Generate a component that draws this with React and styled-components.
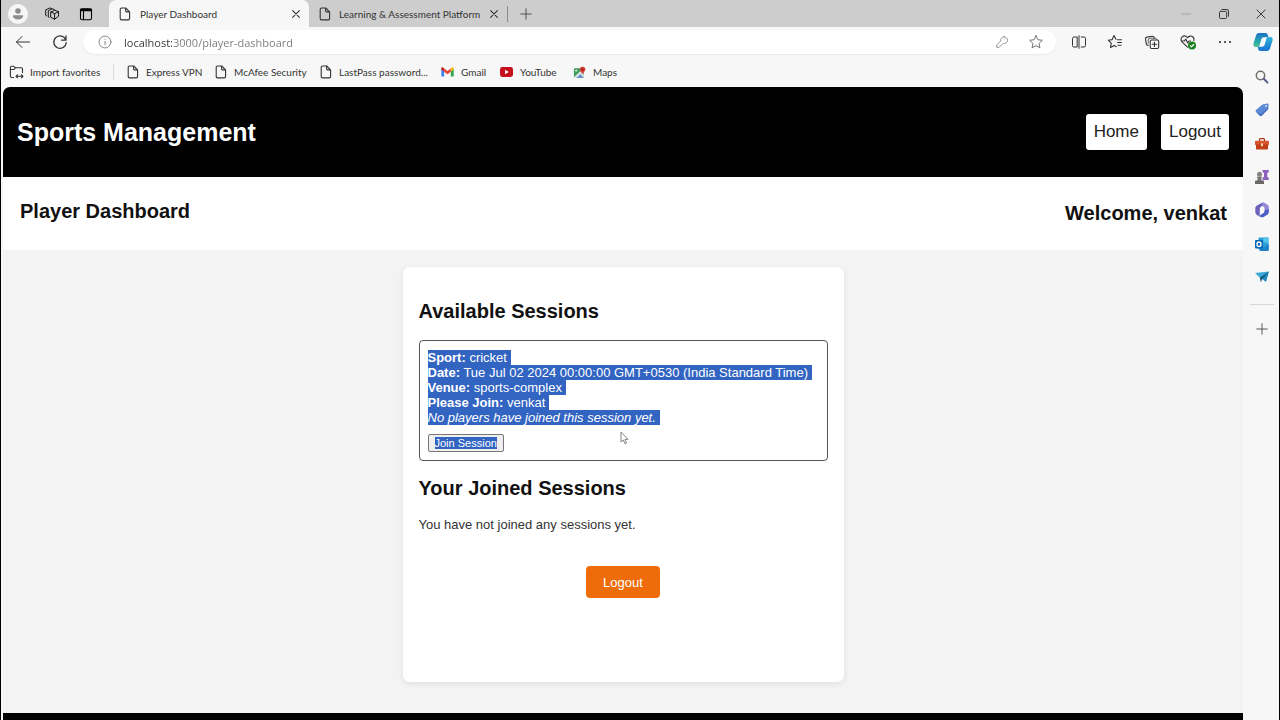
import styled, { createGlobalStyle } from "styled-components";

const GlobalStyle = createGlobalStyle`
  * {
    box-sizing: border-box;
  }

  body {
    margin: 0;
    background-color: #f7f7f7;
    font-family: "Liberation Sans", Arial, sans-serif;
  }

  h1, h2, p {
    margin: 0;
    padding: 0;
  }

  svg {
    flex-shrink: 0;
  }

  button {
    font-family: inherit;
    padding: 0;
    border: none;
    background: none;
    cursor: pointer;
  }
`;

const Window = styled.div`
  display: flex;
  flex-direction: column;
  min-height: 100vh;
  border-left: 1px solid #000;
  border-right: 1px solid #000;
  background-color: #f7f7f7;
`;

const Chrome = styled.div`
  font-family: Lato, "Open Sans", sans-serif;
  font-size: 10px;
  line-height: 14px;
  color: #333;
`;

const TabBar = styled.div`
  display: flex;
  align-items: center;
  height: 27px;
  background-color: #cdcdcd;
`;

const TabBarButton = styled.button`
  display: flex;
  align-items: center;
  justify-content: center;
  width: ${(props) => props.$width || "34px"};
  height: 27px;
`;

const Tab = styled.div`
  display: flex;
  align-items: center;
  gap: ${(props) => (props.$active ? "9px" : "8px")};
  width: ${(props) => (props.$active ? "200px" : "198px")};
  height: 27px;
  margin-left: ${(props) => (props.$active ? "6px" : "0")};
  padding: 0 7px 0 10px;
  border-radius: 7px 7px 0 0;
  background-color: ${(props) => (props.$active ? "#f7f7f7" : "transparent")};
`;

const TabTitle = styled.span`
  flex: 1;
  white-space: nowrap;
`;

const Separator = styled.span`
  width: 1px;
  height: 16px;
  background-color: ${(props) => props.$color};
`;

const IconButton = styled.button`
  display: flex;
  align-items: center;
  justify-content: center;
  color: #333;
`;

const WindowControls = styled.div`
  display: flex;
  justify-content: space-between;
  width: 87px;
  margin-left: auto;
  margin-right: 12px;
`;

const Toolbar = styled.div`
  display: flex;
  align-items: center;
  height: 30px;
  padding-right: 6px;
`;

const NavButtons = styled.div`
  display: flex;
  gap: 21px;
  padding: 0 15px 0 14px;
`;

const AddressBar = styled.label`
  display: flex;
  flex: 1;
  align-items: center;
  gap: 12px;
  height: 24px;
  padding: 0 12px 0 15px;
  border-radius: 12px;
  background-color: #fff;
  box-shadow: 0 1px 2px rgba(0, 0, 0, 0.06);
`;

/* host is darker than the path, like the browser does it */
const AddressInput = styled.input`
  flex: 1;
  min-width: 0;
  padding: 0;
  border: none;
  outline: none;
  font-family: "Open Sans", sans-serif;
  font-size: 11px;
  color: transparent;
  background: linear-gradient(90deg, #333 48px, #7a7a7a 48px);
  background-clip: text;
`;

const AddressIcons = styled.div`
  display: flex;
  gap: 19px;
`;

const ToolIcons = styled.div`
  display: flex;
  align-items: center;
  justify-content: space-between;
  width: 202px;
  margin-left: 15px;
`;

const Body = styled.div`
  display: flex;
  flex: 1;
`;

const Column = styled.div`
  display: flex;
  flex: 1;
  flex-direction: column;
`;

const FavoritesRow = styled(Chrome)`
  display: flex;
  align-items: center;
  height: 30px;
  padding-left: 8px;
`;

const Favorite = styled.a`
  display: flex;
  align-items: center;
  gap: ${(props) => props.$gap || "7px"};
  width: ${(props) => props.$width};
  color: #333;
  text-decoration: none;
  white-space: nowrap;
`;

const LinkList = styled.nav`
  display: flex;
  padding-left: 13px;
`;

const Sidebar = styled.aside`
  width: 36px;
  padding: 12px 0 0 2px;
`;

const SidebarList = styled.div`
  display: flex;
  flex-direction: column;
  align-items: center;
  justify-content: space-between;
  height: 216px;
`;

const SidebarFooter = styled.div`
  display: flex;
  justify-content: center;
  margin: 19px 5px 0;
  padding-top: 17px;
  border-top: 1px solid #d8d8d8;
`;

const Page = styled.div`
  display: flex;
  flex: 1;
  flex-direction: column;
  margin-left: 2px;
  overflow: hidden;
  border-radius: 7px 7px 0 0;
  background-color: #f3f3f3;
`;

const Header = styled.header`
  display: flex;
  align-items: center;
  justify-content: space-between;
  height: 90px;
  padding: 0 14px;
  background-color: #000;
`;

const Brand = styled.h1`
  font-size: 25px;
  color: #fff;
`;

const Nav = styled.nav`
  display: flex;
  gap: 14px;
`;

const NavLink = styled.a`
  padding: 8px;
  border-radius: 3px;
  background-color: #fff;
  font-size: 17px;
  line-height: 20px;
  color: #222;
  text-decoration: none;
`;

const SubHeader = styled.div`
  display: flex;
  justify-content: space-between;
  height: 73px;
  padding: 23px 16px 23px 17px;
  background-color: #fff;
`;

const Heading = styled.h2`
  font-size: 20px;
  line-height: 23px;
  color: #111;
`;

const Welcome = styled(Heading)`
  padding-top: 2px;
`;

const Main = styled.main`
  display: flex;
  justify-content: center;
  padding: 17px 0 31px;
`;

const Card = styled.section`
  width: 441px;
  min-height: 415px;
  padding: 33px 16px;
  border-radius: 7px;
  background-color: #fff;
  box-shadow: 0 2px 6px rgba(0, 0, 0, 0.08);
`;

const Session = styled.div`
  position: relative;
  margin: 17px 0 16px;
  padding: 9px 8px 8px;
  border: 1px solid #555;
  border-radius: 4px;
  font-size: 13px;
  line-height: 15px;
`;

const Line = styled.p`
  white-space: nowrap;
`;

const Selected = styled.mark`
  padding-right: 4px;
  background-color: #3264c2;
  color: #fff;
`;

const JoinButton = styled.button`
  display: block;
  height: 18px;
  margin-top: 9px;
  padding: 0 6px;
  border: 1px solid #777;
  border-radius: 2px;
  background-color: #efefef;
  font-size: 11px;
  line-height: 13px;
`;

const JoinLabel = styled.mark`
  background-color: #3264c2;
  color: #fff;
`;

const Pointer = styled.svg`
  position: absolute;
  top: 90px;
  left: 200px;
`;

const Note = styled.p`
  margin-top: 17px;
  font-size: 13px;
  line-height: 15px;
  color: #333;
`;

const LogoutButton = styled.button`
  display: block;
  height: 32px;
  margin: 34px auto 0;
  padding: 0 17px;
  border-radius: 4px;
  background-color: #ef6c0a;
  font-size: 13px;
  color: #fff;
`;

const Footer = styled.footer`
  flex: 1;
  min-height: 7px;
  background-color: #000;
`;

function Icon({ size = 16, width = 1, children }) {
  return (
    <svg
      width={size}
      height={size}
      viewBox="0 0 16 16"
      fill="none"
      stroke="currentColor"
      strokeWidth={width}
      strokeLinecap="round"
      strokeLinejoin="round"
    >
      {children}
    </svg>
  );
}

function FileIcon() {
  return (
    <svg width="12" height="14" viewBox="0 0 12 14" fill="none" stroke="#333" strokeWidth="1.1" strokeLinejoin="round">
      <path d="M2.5 1h4.2L10.6 4.8V11.6a1.3 1.3 0 0 1-1.3 1.3H2.5a1.3 1.3 0 0 1-1.3-1.3V2.3A1.3 1.3 0 0 1 2.5 1Z" />
      <path d="M6.6 1.2v2.5a1.2 1.2 0 0 0 1.2 1.2h2.6" />
    </svg>
  );
}

function CloseIcon() {
  return (
    <Icon size={12} width={1.5}>
      <path d="M3.5 3.5l9 9M12.5 3.5l-9 9" />
    </Icon>
  );
}

function ProfileIcon() {
  return (
    <svg width="20" height="20" viewBox="0 0 20 20">
      <circle cx="10" cy="10" r="10" fill="#f6f6f6" />
      <circle cx="10" cy="7" r="2.8" fill="#8d8d8d" />
      <path d="M5 11.3h10v1c0 2-2.2 3.2-5 3.2s-5-1.2-5-3.2Z" fill="#8d8d8d" />
    </svg>
  );
}

function WorkspacesIcon() {
  return (
    <Icon width={0.9}>
      <path d="M7 6l3.8-1.8 3.7 1.5v4.6L10.6 13.200 7 11.4Z" />
      <path d="M7 6l3.600 1.600 3.900-1.900M10.6 7.600v5.600" />
      <path d="M5 11.300l-.7-.3V4.700l4-1.900 2 .7M2.500 9.800l-.8-.4V3.900l4-1.900 1.800.5" />
    </Icon>
  );
}

function TabsIcon() {
  return (
    <Icon width={1.100}>
      <rect x="2.500" y="2.700" width="11" height="11" rx="1.500" />
      <path d="M3 4h10" strokeWidth="2.400" />
      <path d="M5.500 5v8.500" />
    </Icon>
  );
}

function BackIcon() {
  return (
    <Icon>
      <path d="M14.5 8h-13M7 2.5L1.5 8 7 13.5" />
    </Icon>
  );
}

function RefreshIcon() {
  return (
    <Icon width={1.200}>
      <path d="M13.900 6.200A6.200 6.200 0 1 0 14.200 8.500M14 1.800v4.400H9.600" />
    </Icon>
  );
}

function InfoIcon() {
  return (
    <Icon size={14}>
      <circle cx="8" cy="8" r="6.800" stroke="#777" />
      <path d="M8 7.200v4M8 4.800v.3" stroke="#777" />
    </Icon>
  );
}

function KeyIcon() {
  return (
    <Icon size={14}>
      <path
        stroke="#888"
        d="M10.300 2a3.900 3.900 0 1 1-1 7.600L4.800 14.100H2v-2.600l4.500-4.600A3.900 3.900 0 0 1 10.300 2ZM11.300 4.700v.1"
      />
    </Icon>
  );
}

function StarIcon() {
  return (
    <Icon>
      <path
        stroke="#777"
        d="M8 1.700l1.900 4 4.400.6-3.200 3.100.8 4.400L8 11.700l-3.900 2.100.8-4.400L1.700 6.300l4.400-.6Z"
      />
    </Icon>
  );
}

function SplitIcon() {
  return (
    <Icon>
      <path d="M5.800 3H3a1.500 1.500 0 0 0-1.500 1.500v7A1.500 1.500 0 0 0 3 13h2.800ZM10.200 3H13a1.500 1.500 0 0 1 1.500 1.500v7A1.500 1.500 0 0 1 13 13h-2.800M8 1.700v12.600" />
    </Icon>
  );
}

function FavoritesIcon() {
  return (
    <Icon width={1.100}>
      <path d="M10.500 5.700h4M10.500 8.500h4M11 11.300h3" />
      <path d="M9 5.300L7 1.500 5.200 5.600 1.300 6.200l2.900 2.900-.7 4.300L7.200 11.400l2 1.300" />
    </Icon>
  );
}

function CollectionsIcon() {
  return (
    <Icon width={1.100}>
      <rect x="6.200" y="6" width="8.500" height="8.500" rx="1.500" />
      <path d="M10.450 8v4.500M8.200 10.250h4.500" />
      <path d="M4.200 11.400c-1 0-1.700-.6-1.900-1.600L1.500 5c-.1-1 .4-1.800 1.400-1.900l5.300-.9c1-.1 1.800.3 2 1.300l.1.500" />
      <path d="M4.200 9.300V6.200A2 2 0 0 1 6.200 4.200h5c.9 0 1.600.5 1.800 1.300" strokeWidth="0.800" />
    </Icon>
  );
}

function HealthIcon() {
  return (
    <Icon width={1.100}>
      <path d="M7.500 13.200L2 7.800a3.400 3.400 0 0 1 .2-4.900c1.600-1.400 3.700-1 5.300.7 1.600-1.700 3.900-2.100 5.400-.6 1 1 1.300 2.300.9 3.500M1.800 7h2.700l1.300-2 1.800 4 1.300-2h1.500" />
      <circle cx="12" cy="11.500" r="4" fill="#17821b" stroke="none" />
      <path d="M10.300 11.600l1.200 1.200 2.200-2.300" stroke="#fff" />
    </Icon>
  );
}

function MoreIcon() {
  return (
    <svg width="16" height="16" viewBox="0 0 16 16" fill="#333">
      <circle cx="3" cy="8" r="1.100" />
      <circle cx="8" cy="8" r="1.100" />
      <circle cx="13" cy="8" r="1.100" />
    </svg>
  );
}

function CopilotIcon() {
  return (
    <svg width="20" height="20" viewBox="0 0 20 20">
      <defs>
        <linearGradient id="copilotLeft" x1="0" y1="0" x2="0" y2="1">
          <stop offset="0" stopColor="#1a6fc4" />
          <stop offset="0.600" stopColor="#28a8b0" />
          <stop offset="1" stopColor="#52c08c" />
        </linearGradient>
        <linearGradient id="copilotRight" x1="0" y1="0" x2="0" y2="1">
          <stop offset="0" stopColor="#2fb4d8" />
          <stop offset="1" stopColor="#1674d4" />
        </linearGradient>
      </defs>
      <path d="M6 1h6.500c1.500 0 2 1 2.400 2.300l.6 2H11c-1.500 0-2.300.8-2.700 2.200L6.800 13c-.4 1.200-1 2-2.500 2H2.800C.5 15 0 13 .6 11L3 3.500C3.500 2 4.300 1 6 1Z" fill="url(#copilotLeft)" />
      <path d="M14 19H7.500c-1.500 0-2-1-2.400-2.300l-.6-2H9c1.500 0 2.300-.8 2.700-2.200L13.200 7c.4-1.200 1-2 2.500-2h1.500c2.300 0 2.800 2 2.200 4L17 16.500c-.5 1.500-1.300 2.500-3 2.500Z" fill="url(#copilotRight)" />
      <path d="M9.300 6.500h4l-2.500 7h-4Z" fill="#f3fbff" />
    </svg>
  );
}

function ImportIcon() {
  return (
    <svg width="15" height="14" viewBox="0 0 15 14" fill="none" stroke="#333" strokeWidth="1.100" strokeLinejoin="round">
      <path d="M5 12.500H2.600a1.200 1.200 0 0 1-1.200-1.200V2.500c0-.7.500-1.200 1.200-1.200h2.200l1.600 1.500L5 4.500H1.500M6.400 2.800h5.900c.8 0 1.200.5 1.200 1.200v4" />
      <path d="M7 11.300h7M8.800 9.500L7 11.300l1.800 1.800M12.200 9.500l1.800 1.800-1.800 1.800" />
    </svg>
  );
}

function GmailIcon() {
  return (
    <svg width="13" height="10" viewBox="0 0 13 10">
      <path d="M.3 1.500v7.200c0 .5.400.9.900.9h2V4.200Z" fill="#4285f4" />
      <path d="M12.700 1.500v7.200c0 .5-.4.900-.9.900h-2V4.200Z" fill="#34a853" />
      <path d="M9.800 1.400v3.300l2.900-2.200v-.8c0-1.300-1.300-1.700-2.100-1Z" fill="#fbbc04" />
      <path d="M3.200 4.700V1.400l3.300 2.500 3.300-2.500v3.300L6.500 7.200Z" fill="#ea4335" />
      <path d="M.3 1.700v.8l2.900 2.200V1.400L2.400.7C1.600 0 .3.400.3 1.700Z" fill="#c5221f" />
    </svg>
  );
}

function YouTubeIcon() {
  return (
    <svg width="13" height="10" viewBox="0 0 13 10">
      <rect width="13" height="10" rx="2.400" fill="#c80d1c" />
      <path d="M5 2.800v4.400L8.800 5Z" fill="#fff" />
    </svg>
  );
}

function MapsIcon() {
  return (
    <svg width="13" height="13" viewBox="0 0 14 13">
      <rect x="1" y="2" width="10.500" height="10.500" rx="1" fill="#3f9d5b" />
      <path d="M1 11.500L8 5l3.500 3.500v3a1 1 0 0 1-1 1H2a1 1 0 0 1-1-1Z" fill="#dfe5e8" />
      <path d="M3.500 12.500L8 8l3.500 4.500Z" fill="#6b93c8" />
      <path d="M2.200 4.500h2.500M3.400 3.500v2" stroke="#fff" strokeWidth="0.900" />
      <path d="M10.300.2a3 3 0 0 1 3 3c0 2-2.400 2.800-3 5.200-.6-2.400-3-3.200-3-5.200a3 3 0 0 1 3-3Z" fill="#d93a2f" />
      <circle cx="10.300" cy="3.200" r="1" fill="#82201a" />
    </svg>
  );
}

function SearchIcon() {
  return (
    <svg width="16" height="16" viewBox="0 0 16 16" fill="none">
      <circle cx="6.500" cy="6.500" r="4.200" stroke="#707070" strokeWidth="1.500" />
      <path d="M9.800 9.800l3.700 3.700" stroke="#5a5f8c" strokeWidth="2" strokeLinecap="round" />
    </svg>
  );
}

function ShoppingIcon() {
  return (
    <svg width="16" height="16" viewBox="0 0 16 16">
      <path d="M8.500 2.500l5-1c.7 0 1.200.5 1.100 1.200l-.5 4.600-6.400 6.400c-.6.600-1.300.6-1.900 0L1.900 9.800c-.5-.6-.5-1.300 0-1.900Z" fill="#5c88d6" />
      <path d="M1.900 9.800l3.900 3.900c.6.600 1.300.6 1.900 0l6.400-6.400.2-2-7.500 6.600Z" fill="#4a73c2" />
      <circle cx="12" cy="4" r="0.900" fill="#dce8ff" />
    </svg>
  );
}

function ToolsIcon() {
  return (
    <svg width="16" height="16" viewBox="0 0 16 16">
      <path d="M5.500 5V3.500c0-.6.300-.9.900-.9h3.200c.6 0 .9.300.9.900V5" fill="none" stroke="#a33417" strokeWidth="1.200" />
      <rect x="1" y="4.800" width="14" height="4.500" rx="1" fill="#d9532c" />
      <path d="M2 8.500h12v4c0 .6-.4 1-1 1H3c-.6 0-1-.4-1-1Z" fill="#c23e18" />
      <rect x="7" y="7.300" width="2" height="3" rx="0.500" fill="#ffd9b0" />
    </svg>
  );
}

function GamesIcon() {
  return (
    <svg width="16" height="16" viewBox="0 0 16 16">
      <path d="M8.500 1h6.300v2l-1.500 1v3.500l1.500 1.700V11H8.500V9.200L10 7.500V4L8.500 3Z" fill="#8c62bd" />
      <circle cx="5.500" cy="5.300" r="2.500" fill="#858585" />
      <path d="M3 7.800h5v1.400h-.8l.6 2.800H3.200l.6-2.800H3Z" fill="#777" />
      <path d="M1 12.500c0-.6.400-1 1-1h7c.6 0 1 .4 1 1V15H1Z" fill="#686868" />
    </svg>
  );
}

function OfficeIcon() {
  return (
    <svg width="16" height="16" viewBox="0 0 16 16">
      <path d="M7.600.9L3 3.400C1.900 4 1.300 5 1.300 6.200v3.900c0 1.200.6 2.200 1.600 2.800l1.900 1.100c.6-.4 1-1.200 1-2.100V6.700c0-.9.400-1.600 1.100-2l3.700-2.200Z" fill="#6a62bd" />
      <path d="M7.600.9c1-.5 2-.4 2.900.1l2.700 1.600c1 .6 1.600 1.600 1.600 2.800v4.400L10.500 7.500V6.300c0-.9-.5-1.500-1.100-1.900L8.500 4Z" fill="#9187d8" />
      <path d="M4.800 14l1.600.9c1 .6 2.200.6 3.200 0l3.600-2.100c1-.6 1.600-1.700 1.600-2.900V7.300l-4.300.7v1.200c0 .9-.4 1.400-1 1.800Z" fill="#4c5fc7" />
    </svg>
  );
}

function OutlookIcon() {
  return (
    <svg width="16" height="16" viewBox="0 0 16 16">
      <rect x="4.500" y="1.500" width="10" height="12.500" rx="1" fill="#2c9fdc" />
      <path d="M9.500 1.500h5v5h-5Z" fill="#54c6ee" />
      <path d="M5 8l5 3.500L14.800 8v6c0 .6-.4 1-1 1H6Z" fill="#1d83c9" />
      <rect x="1" y="4" width="8" height="8.500" rx="1" fill="#0e6ab3" />
      <ellipse cx="5" cy="8.200" rx="2" ry="2.200" fill="none" stroke="#fff" strokeWidth="1.300" />
    </svg>
  );
}

function DropIcon() {
  return (
    <svg width="16" height="16" viewBox="0 0 16 16">
      <path d="M1 4l14-1.500L5.800 8.500Z" fill="#38a8d8" />
      <path d="M15 2.500L12 13 8.700 10.200 5.800 8.500Z" fill="#1c8abb" />
      <path d="M5.800 8.500L15 2.500 8.300 9.900l-1.500 3.300Z" fill="#135a82" />
    </svg>
  );
}

function PlusIcon({ color = "#444" }) {
  return (
    <Icon size={14}>
      <path d="M8 2v12M2 8h12" stroke={color} />
    </Icon>
  );
}

const tools = [
  ["Split screen", SplitIcon],
  ["Favorites", FavoritesIcon],
  ["Collections", CollectionsIcon],
  ["Browser essentials", HealthIcon],
  ["Settings and more", MoreIcon],
  ["Copilot", CopilotIcon],
];

const sidebarApps = [
  ["Search", SearchIcon],
  ["Shopping", ShoppingIcon],
  ["Tools", ToolsIcon],
  ["Games", GamesIcon],
  ["Microsoft 365", OfficeIcon],
  ["Outlook", OutlookIcon],
  ["Drop", DropIcon],
];

const favorites = [
  { name: "Express VPN", icon: FileIcon, width: "88px" },
  { name: "McAfee Security", icon: FileIcon, width: "105px" },
  { name: "LastPass password...", icon: FileIcon, width: "121px" },
  { name: "Gmail", icon: GmailIcon, width: "59px" },
  { name: "YouTube", icon: YouTubeIcon, width: "73px" },
  { name: "Maps", icon: MapsIcon, width: "50px" },
];

const session = [
  ["Sport:", "cricket"],
  ["Date:", "Tue Jul 02 2024 00:00:00 GMT+0530 (India Standard Time)"],
  ["Venue:", "sports-complex"],
  ["Please Join:", "venkat"],
];

function BrowserTop() {
  return (
    <Chrome>
      <TabBar>
        <TabBarButton aria-label="Profile">
          <ProfileIcon />
        </TabBarButton>
        <TabBarButton aria-label="Workspaces">
          <WorkspacesIcon />
        </TabBarButton>
        <TabBarButton aria-label="Tab actions">
          <TabsIcon />
        </TabBarButton>
        <Tab $active>
          <FileIcon />
          <TabTitle>Player Dashboard</TabTitle>
          <IconButton aria-label="Close tab">
            <CloseIcon />
          </IconButton>
        </Tab>
        <Tab>
          <FileIcon />
          <TabTitle>Learning &amp; Assessment Platform</TabTitle>
          <IconButton aria-label="Close tab">
            <CloseIcon />
          </IconButton>
        </Tab>
        <Separator $color="#8c8c8c" />
        <TabBarButton aria-label="New tab" $width="36px">
          <PlusIcon />
        </TabBarButton>
        <WindowControls>
          <IconButton aria-label="Minimize">
            <Icon size={12}>
              <path d="M2 8h12" stroke="#999" />
            </Icon>
          </IconButton>
          <IconButton aria-label="Restore">
            <Icon size={12} width={1.300}>
              <rect x="2" y="4.500" width="9.500" height="9.500" rx="1.500" />
              <path d="M5 2h7a2 2 0 0 1 2 2v7" />
            </Icon>
          </IconButton>
          <IconButton aria-label="Close">
            <Icon size={12} width={1.300}>
              <path d="M2.500 2.500l11 11M13.500 2.500l-11 11" />
            </Icon>
          </IconButton>
        </WindowControls>
      </TabBar>
      <Toolbar>
        <NavButtons>
          <IconButton aria-label="Back">
            <BackIcon />
          </IconButton>
          <IconButton aria-label="Refresh">
            <RefreshIcon />
          </IconButton>
        </NavButtons>
        <AddressBar>
          <InfoIcon />
          <AddressInput aria-label="Address" defaultValue="localhost:3000/player-dashboard" />
          <AddressIcons>
            <IconButton aria-label="Passwords">
              <KeyIcon />
            </IconButton>
            <IconButton aria-label="Add to favorites">
              <StarIcon />
            </IconButton>
          </AddressIcons>
        </AddressBar>
        <ToolIcons>
          {tools.map(([name, ToolIcon]) => (
            <IconButton key={name} aria-label={name}>
              <ToolIcon />
            </IconButton>
          ))}
        </ToolIcons>
      </Toolbar>
    </Chrome>
  );
}

function FavoritesBar() {
  return (
    <FavoritesRow>
      <Favorite href="#import" $gap="6px" $width="104px">
        <ImportIcon />
        Import favorites
      </Favorite>
      <Separator $color="#dcdcdc" />
      <LinkList>
        {favorites.map(({ name, icon: FavIcon, width }) => (
          <Favorite key={name} href="#favorite" $width={width}>
            <FavIcon />
            {name}
          </Favorite>
        ))}
      </LinkList>
    </FavoritesRow>
  );
}

function SessionBox() {
  return (
    <Session>
      {session.map(([label, value]) => (
        <Line key={label}>
          <Selected>
            <strong>{label}</strong> {value}
          </Selected>
        </Line>
      ))}
      <Line>
        <Selected>
          <em>No players have joined this session yet.</em>
        </Selected>
      </Line>
      <JoinButton>
        <JoinLabel>Join Session</JoinLabel>
      </JoinButton>
      <Pointer width="9" height="14" viewBox="0 0 9 14">
        <path d="M1 1v10l2.300-2 1.700 3.800 1.500-.7L4.900 8.400H8Z" fill="#fff" stroke="#777" strokeWidth="0.900" />
      </Pointer>
    </Session>
  );
}

function Dashboard() {
  return (
    <Page>
      <Header>
        <Brand>Sports Management</Brand>
        <Nav>
          <NavLink href="#home">Home</NavLink>
          <NavLink href="#logout">Logout</NavLink>
        </Nav>
      </Header>
      <SubHeader>
        <Heading>Player Dashboard</Heading>
        <Welcome>Welcome, venkat</Welcome>
      </SubHeader>
      <Main>
        <Card>
          <Heading>Available Sessions</Heading>
          <SessionBox />
          <Heading>Your Joined Sessions</Heading>
          <Note>You have not joined any sessions yet.</Note>
          <LogoutButton>Logout</LogoutButton>
        </Card>
      </Main>
      <Footer />
    </Page>
  );
}

function App() {
  return (
    <>
      <GlobalStyle />
      <Window>
        <BrowserTop />
        <Body>
          <Column>
            <FavoritesBar />
            <Dashboard />
          </Column>
          <Sidebar>
            <SidebarList>
              {sidebarApps.map(([name, AppIcon]) => (
                <IconButton key={name} aria-label={name}>
                  <AppIcon />
                </IconButton>
              ))}
            </SidebarList>
            <SidebarFooter>
              <IconButton aria-label="Customize">
                <PlusIcon />
              </IconButton>
            </SidebarFooter>
          </Sidebar>
        </Body>
      </Window>
    </>
  );
}

export default App;
